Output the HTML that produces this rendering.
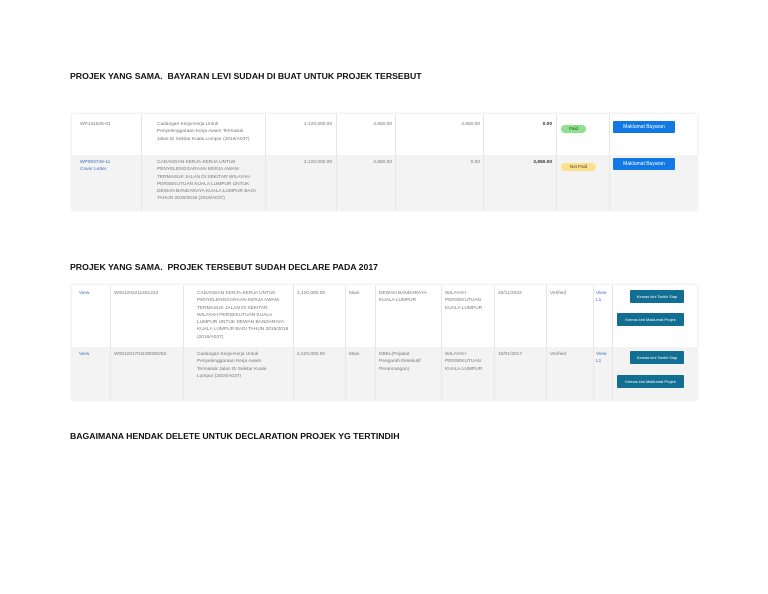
<!DOCTYPE html>
<html><head><meta charset="utf-8"><style>
body{margin:0;width:768px;height:594px;background:#fff;position:relative;font-family:"Liberation Sans",sans-serif;overflow:hidden}
.h{position:absolute;left:70px;font-size:8.7px;font-weight:bold;color:#111;letter-spacing:0;white-space:nowrap}
.t{position:absolute;font-size:4.8px;line-height:7.3px;color:#777}
.r{text-align:right}
.l{color:#3a6ebf}
.tb{position:absolute;background:#fff;box-shadow:0 0 3px #ddd}
.v{position:absolute;width:1px;background:#e6e6e6}
.g{position:absolute;background:#f3f3f3}
.btn{position:absolute;background:#1278e6;color:#fff;font-size:5px;text-align:center;line-height:12px;border-radius:1px}
.btn2{position:absolute;background:#136e93;color:#fff;font-size:4px;text-align:center;line-height:13px;border-radius:1px}
.pill{position:absolute;font-size:4.5px;text-align:center;line-height:8px;border-radius:4px;color:#444}
</style></head><body>
<div class="h" style="top:71px">PROJEK YANG SAMA.&nbsp; BAYARAN LEVI SUDAH DI BUAT UNTUK PROJEK TERSEBUT</div>
<div class="h" style="top:262px">PROJEK YANG SAMA.&nbsp; PROJEK TERSEBUT SUDAH DECLARE PADA 2017</div>
<div class="h" style="top:431px">BAGAIMANA HENDAK DELETE UNTUK DECLARATION PROJEK YG TERTINDIH</div>

<div class="tb" style="left:72px;top:114px;width:625px;height:96px"></div>
<div class="g" style="left:72px;top:155px;width:625px;height:55px"></div>
<div class="v" style="left:141px;top:114px;height:96px"></div>
<div class="v" style="left:265px;top:114px;height:96px"></div>
<div class="v" style="left:336px;top:114px;height:96px"></div>
<div class="v" style="left:395px;top:114px;height:96px"></div>
<div class="v" style="left:483px;top:114px;height:96px"></div>
<div class="v" style="left:556px;top:114px;height:96px"></div>
<div class="v" style="left:609px;top:114px;height:96px"></div>
<div class="t" style="left:80px;top:121px">WP131536-01</div>
<div class="t" style="left:157px;top:121px;width:98px">Cadangan Kerja-Kerja Untuk Penyelenggaraan Kerja Awam Termasuk Jalan Di Sekitar Kuala Lumpur (2016/A037)</div>
<div class="t r" style="left:270px;top:121px;width:62px">2,120,000.00</div>
<div class="t r" style="left:340px;top:121px;width:52px">2,650.00</div>
<div class="t r" style="left:400px;top:121px;width:80px">2,650.00</div>
<div class="t r" style="left:486px;top:121px;width:66px;color:#333;font-weight:bold">0.00</div>
<div class="pill" style="left:561px;top:125px;width:25px;background:#8be28b">Paid</div>
<div class="btn" style="left:613px;top:121px;width:62px">Maklumat Bayaran</div>
<div class="t l" style="left:80px;top:159px">WP083749-11<br>Cover Letter</div>
<div class="t" style="left:157px;top:159px;width:106px">CADANGAN KERJA-KERJA UNTUK PENYELENGGARAAN KERJA AWAM TERMASUK JALAN DI SEKITAR WILAYAH PERSEKUTUAN KUALA LUMPUR UNTUK DEWAN BANDARAYA KUALA LUMPUR BAGI TAHUN 2016/2018 (2016/A037)</div>
<div class="t r" style="left:270px;top:159px;width:62px">2,120,000.00</div>
<div class="t r" style="left:340px;top:159px;width:52px">2,650.00</div>
<div class="t r" style="left:400px;top:159px;width:80px">0.00</div>
<div class="t r" style="left:486px;top:159px;width:66px;color:#333;font-weight:bold">2,650.00</div>
<div class="pill" style="left:561px;top:163px;width:35px;background:#fde08a">Not Paid</div>
<div class="btn" style="left:613px;top:158px;width:62px">Maklumat Bayaran</div>

<div class="tb" style="left:72px;top:285px;width:625px;height:115px"></div>
<div class="g" style="left:72px;top:347px;width:625px;height:53px"></div>
<div class="v" style="left:110px;top:285px;height:115px"></div>
<div class="v" style="left:183px;top:285px;height:115px"></div>
<div class="v" style="left:293px;top:285px;height:115px"></div>
<div class="v" style="left:345px;top:285px;height:115px"></div>
<div class="v" style="left:375px;top:285px;height:115px"></div>
<div class="v" style="left:441px;top:285px;height:115px"></div>
<div class="v" style="left:494px;top:285px;height:115px"></div>
<div class="v" style="left:546px;top:285px;height:115px"></div>
<div class="v" style="left:593px;top:285px;height:115px"></div>
<div class="v" style="left:612px;top:285px;height:115px"></div>
<div class="t l" style="left:79px;top:290px">View</div>
<div class="t" style="left:114px;top:290px">W001202211461313</div>
<div class="t" style="left:197px;top:290px;width:92px">CADANGAN KERJA-KERJA UNTUK PENYELENGGARAAN KERJA AWAM TERMASUK JALAN DI SEKITAR WILAYAH PERSEKUTUAN KUALA LUMPUR UNTUK DEWAN BANDARAYA KUALA LUMPUR BAGI TAHUN 2016/2018 (2016/A037)</div>
<div class="t" style="left:297px;top:290px">2,120,000.00</div>
<div class="t" style="left:349px;top:290px">Main</div>
<div class="t" style="left:379px;top:290px;width:60px">DEWAN BANDARAYA KUALA LUMPUR</div>
<div class="t" style="left:445px;top:290px;width:48px">WILAYAH PERSEKUTUAN KUALA LUMPUR</div>
<div class="t" style="left:498px;top:290px">25/11/2022</div>
<div class="t" style="left:550px;top:290px">Verified</div>
<div class="t l" style="left:596px;top:290px">View<br>L1</div>
<div class="btn2" style="left:630px;top:290px;width:54px">Kemas kini Tarikh Siap</div>
<div class="btn2" style="left:617px;top:313px;width:67px">Kemas kini Maklumat Projek</div>
<div class="t l" style="left:79px;top:351px">View</div>
<div class="t" style="left:114px;top:351px">W001201701100000253</div>
<div class="t" style="left:197px;top:351px;width:82px">Cadangan Kerja-Kerja Untuk Penyelenggaraan Kerja Awam Termasuk Jalan Di Sekitar Kuala Lumpur (2016/A037)</div>
<div class="t" style="left:297px;top:351px">2,120,000.00</div>
<div class="t" style="left:349px;top:351px">Main</div>
<div class="t" style="left:379px;top:351px;width:50px">DBKL(Pejabat Pengarah Eksekutif Perancangan)</div>
<div class="t" style="left:445px;top:351px;width:48px">WILAYAH PERSEKUTUAN KUALA LUMPUR</div>
<div class="t" style="left:498px;top:351px">10/01/2017</div>
<div class="t" style="left:550px;top:351px">Verified</div>
<div class="t l" style="left:596px;top:351px">View<br>L1</div>
<div class="btn2" style="left:630px;top:351px;width:54px">Kemas kini Tarikh Siap</div>
<div class="btn2" style="left:617px;top:375px;width:67px">Kemas kini Maklumat Projek</div>
</body></html>
